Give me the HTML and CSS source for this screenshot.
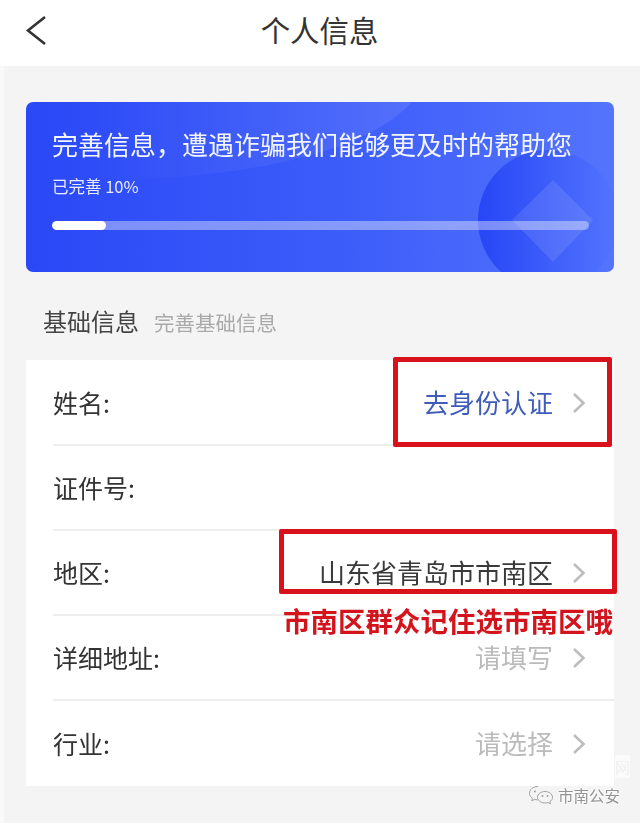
FILE: index.html
```html
<!DOCTYPE html>
<html lang="zh-CN">
<head>
<meta charset="utf-8">
<title>个人信息</title>
<link rel="stylesheet" href="styles.css">
</head>
<body>
<div class="page">
  <header class="topbar">
    <svg class="back" viewBox="0 0 22 32" width="22" height="32"><path d="M20 2 L3 15.500 L20 29" fill="none" stroke="#333" stroke-width="2.600"/></svg>
    <h1 class="title">个人信息</h1>
  </header>
  <main class="content">
    <section class="banner">
      <svg class="banner-art" viewBox="0 0 588 170" width="588" height="170">
        <defs>
          <linearGradient id="sweep" gradientUnits="userSpaceOnUse" x1="60" y1="0" x2="386" y2="0"><stop offset="0" stop-color="#fff" stop-opacity="0"/><stop offset="1" stop-color="#fff" stop-opacity=".09"/></linearGradient>
          <linearGradient id="disc" x1="0" y1="0" x2="1" y2="0"><stop offset="0" stop-color="#2746f6"/><stop offset=".55" stop-color="#3f60fa"/><stop offset="1" stop-color="#5474fd"/></linearGradient>
        </defs>
        <path d="M0 0 H386 C345 45 250 68 140 76 C90 79 40 80 0 80 Z" fill="url(#sweep)"/>
        <circle cx="522" cy="118" r="70" fill="url(#disc)"/>
        <path d="M527 78 L567 118 L527 160 L486 118Z" fill="#fff" fill-opacity=".1"/>
      </svg>
      <h2 class="banner-title">完善信息，遭遇诈骗我们能够更及时的帮助您</h2>
      <p class="banner-sub">已完善 10%</p>
      <div class="track"><div class="fill"></div></div>
    </section>
    <div class="section-head">
      <span class="section-title">基础信息</span>
      <span class="section-sub">完善基础信息</span>
    </div>
    <section class="card">
      <div class="row">
        <span class="label">姓名:</span>
        <span class="value link">去身份认证</span>
        <svg class="chev" viewBox="0 0 14 22" width="14" height="22"><path d="M2 2 L11.500 11 L2 20" fill="none" stroke="#bdbdbd" stroke-width="2.600"/></svg>
      </div>
      <div class="row">
        <span class="label">证件号:</span>
      </div>
      <div class="row">
        <span class="label">地区:</span>
        <span class="value">山东省青岛市市南区</span>
        <svg class="chev" viewBox="0 0 14 22" width="14" height="22"><path d="M2 2 L11.500 11 L2 20" fill="none" stroke="#bdbdbd" stroke-width="2.600"/></svg>
      </div>
      <div class="row">
        <span class="label">详细地址:</span>
        <span class="value hint">请填写</span>
        <svg class="chev" viewBox="0 0 14 22" width="14" height="22"><path d="M2 2 L11.500 11 L2 20" fill="none" stroke="#bdbdbd" stroke-width="2.600"/></svg>
      </div>
      <div class="row">
        <span class="label">行业:</span>
        <span class="value hint">请选择</span>
        <svg class="chev" viewBox="0 0 14 22" width="14" height="22"><path d="M2 2 L11.500 11 L2 20" fill="none" stroke="#bdbdbd" stroke-width="2.600"/></svg>
      </div>
    </section>
  </main>
  <div class="mark mark-a"></div>
  <div class="mark mark-b"></div>
  <div class="note">市南区群众记住选市南区哦</div>
  <div class="wm-ghost">网</div>
  <div class="wm">
    <svg class="wm-icon" viewBox="0 0 26 22" width="26" height="22">
      <path d="M10 2.500 C5 2.500 1.500 5.600 1.500 9.300 C1.500 11.500 2.700 13.200 4.500 14.400 L3.800 16.800 L6.500 15.400 C7.500 15.700 8.500 15.800 9.500 15.800" fill="none" stroke="#a0a0a0" stroke-width="1"/>
      <path d="M17 7.500 C21 7.500 24.500 10 24.500 13.300 C24.500 15.200 23.500 16.700 21.800 17.800 L22.400 19.800 L20 18.600 C15 20 9.500 17.500 9.500 13.300 C9.500 10 13 7.500 17 7.500Z" fill="none" stroke="#a0a0a0" stroke-width="1"/>
      <circle cx="7" cy="7.500" r="1" fill="#a0a0a0"/><circle cx="14.500" cy="12" r="1" fill="#a0a0a0"/><circle cx="19.500" cy="12" r="1" fill="#a0a0a0"/>
    </svg>
    <span class="wm-text">市南公安</span>
  </div>
</div>
</body>
</html>
```
FILE: styles.css
```css
* { box-sizing: border-box; margin: 0; padding: 0; }
html, body { width: 640px; height: 823px; overflow: hidden; }
body { font-family: "Noto Sans CJK SC", "Noto Sans", sans-serif; background: #f4f4f4; color: #333; }
.page { position: relative; width: 640px; height: 823px; filter: blur(0.35px); }
.topbar { height: 66px; background: #fff; display: flex; align-items: center; justify-content: center; position: relative; }
.back { position: absolute; left: 25px; top: 15px; }
.title { font-size: 29.400px; font-weight: 400; line-height: 1; color: #333; margin-top: -7px; margin-left: -1px; }
.content { padding: 36px 26px 0 22px; border-left: 4px solid #f9f9f9; height: 757px; }
.banner { position: relative; height: 170px; border-radius: 7px; overflow: hidden; padding: 25px 26px 0; color: #fff;
  background: linear-gradient(90deg, #2a48f6 0%, #3d5dfa 55%, #5474fd 100%); }
.banner-art { position: absolute; left: 0; top: 0; }
.banner-title { position: relative; font-size: 26px; font-weight: 400; line-height: 34px; white-space: nowrap; color: #f2f5ff; }
.banner-sub { position: relative; margin-top: 13px; font-size: 16.500px; line-height: 24px; color: #e6ebff; }
.track { position: relative; margin-top: 23px; width: 537px; height: 9px; border-radius: 5px; background: rgba(255,255,255,.38); overflow: hidden; }
.fill { width: 10%; height: 100%; border-radius: 5px; background: #fff; }
.section-head { display: flex; align-items: baseline; gap: 15px; padding: 33px 0 0 17px; height: 88px; }
.section-title { font-size: 24px; line-height: 32px; color: #444; }
.section-sub { font-size: 20.500px; line-height: 32px; color: #aaa; }
.card { background: #fff; padding-top: 1px; }
.row { height: 85px; margin-left: 27px; padding-right: 28px; display: flex; align-items: center; gap: 19px; border-bottom: 2px solid #eeeeee; }
.row:last-child { border-bottom: 0; }
.label { flex: 1; font-size: 25px; line-height: 34px; color: #333; margin-top: -2px; }
.value { font-size: 26px; line-height: 34px; color: #3a3a3a; white-space: nowrap; margin-top: -1px; }
.link { color: #3f5db8; }
.hint { color: #bbb; }
.chev { flex: none; }
.mark { position: absolute; border: 5px solid #d8111a; border-radius: 2px; }
.mark-a { left: 393px; top: 357px; width: 219px; height: 90px; }
.mark-b { left: 279px; top: 529px; width: 338px; height: 65px; }
.note { position: absolute; left: 283px; top: 602px; width: 332px; font-size: 27.500px; line-height: 36px; font-weight: 700; color: #d4141c; white-space: nowrap; }
.wm { position: absolute; left: 528px; top: 784px; display: flex; align-items: center; gap: 4px; }
.wm-text { font-size: 15.500px; line-height: 22px; color: #949494; text-shadow: 0 0 3px #fff, 0 0 3px #fff; }
.wm-ghost { position: absolute; left: 615px; top: 755px; width: 15px; height: 23px; font-size: 15px; line-height: 23px; color: #f0f0f0; background: #fbfbfb; }
```
